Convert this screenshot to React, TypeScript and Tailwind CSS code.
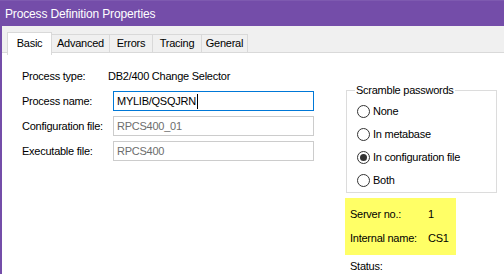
import React from "react";

const Radio = ({ label, checked }: { label: string; checked?: boolean }) => (
  <div className="flex h-[23px] items-center">
    <span className="flex h-[13px] w-[13px] items-center justify-center rounded-full border border-[#333333] bg-white">
      {checked && <span className="h-[7px] w-[7px] rounded-full bg-[#333333]" />}
    </span>
    <span className="ml-[3px] whitespace-nowrap">{label}</span>
  </div>
);

const Field = ({
  label,
  value,
  active,
  cursor,
}: {
  label: string;
  value: string;
  active?: boolean;
  cursor?: boolean;
}) => (
  <div className="flex h-[20px] items-center">
    <span className="w-[91px] shrink-0 whitespace-nowrap">{label}</span>
    <div
      className={
        active
          ? "flex h-[20px] w-[201px] items-center border border-[#0078D7] bg-white pl-[3px] text-black"
          : "flex h-[20px] w-[201px] items-center border border-[#CCCCCC] bg-white pl-[3px] text-[#6D6D6D]"
      }
    >
      <span>{value}</span>
      {cursor && <span className="ml-[1px] h-[15px] w-[1px] bg-black" />}
    </div>
  </div>
);

export default function App() {
  return (
    <div className="flex h-[274px] w-[504px] flex-col overflow-hidden bg-white font-['Liberation_Sans',Arial,sans-serif] text-[11px] leading-none tracking-[-0.25px] text-black">
      <div className="flex h-[26px] shrink-0 items-center border-t border-[#7E5AB0] bg-[#744DA9] pl-[5px] text-[12px] tracking-[-0.15px] text-white">
        Process Definition Properties
      </div>
      <div className="flex flex-1 flex-col border-l-2 border-[#744DA9]">
        <div className="flex h-[27px] shrink-0 items-end border-b border-[#D9D9D9] bg-[#F0F0F0] pl-[5px]">
          <div className="relative z-10 mb-[-3px] flex h-[23px] w-[45px] items-start justify-center border border-b-0 border-[#D9D9D9] bg-white pt-[5px]">
            Basic
          </div>
          <div className="flex h-[18px] w-[58px] items-center justify-center border border-b-0 border-l-0 border-[#D9D9D9]">
            Advanced
          </div>
          <div className="flex h-[18px] w-[43px] items-center justify-center border border-b-0 border-l-0 border-[#D9D9D9]">
            Errors
          </div>
          <div className="flex h-[18px] w-[49px] items-center justify-center border border-b-0 border-l-0 border-[#D9D9D9]">
            Tracing
          </div>
          <div className="flex h-[18px] w-[46px] items-center justify-center border border-b-0 border-l-0 border-[#D9D9D9]">
            General
          </div>
        </div>
        <div className="flex flex-1 pl-[20px]">
          <div className="flex w-[323px] shrink-0 flex-col gap-[5px] pt-[13px]">
            <div className="flex h-[20px] items-center">
              <span className="w-[86px] shrink-0">Process type:</span>
              <span>DB2/400 Change Selector</span>
            </div>
            <Field label="Process name:" value="MYLIB/QSQJRN" active cursor />
            <Field label="Configuration file:" value="RPCS400_01" />
            <Field label="Executable file:" value="RPCS400" />
          </div>
          <div className="flex w-[152px] shrink-0 flex-col pt-[29px]">
            <fieldset className="ml-[1px] h-[111px] border border-[#DCDCDC] pl-[10px]">
              <legend className="ml-[-2px] px-[1px] leading-[16px]">Scramble passwords</legend>
              <div className="mt-[2px] flex flex-col">
                <Radio label="None" />
                <Radio label="In metabase" />
                <Radio label="In configuration file" checked />
                <Radio label="Both" />
              </div>
            </fieldset>
            <div className="mt-[5px] flex h-[57px] w-[111px] flex-col justify-center gap-[13px] bg-[#FFFF66] pl-[5px]">
              <div className="flex">
                <span className="w-[78px]">Server no.:</span>
                <span>1</span>
              </div>
              <div className="flex">
                <span className="w-[78px]">Internal name:</span>
                <span>CS1</span>
              </div>
            </div>
            <div className="mt-[6px] pl-[5px]">Status:</div>
          </div>
        </div>
      </div>
    </div>
  );
}
